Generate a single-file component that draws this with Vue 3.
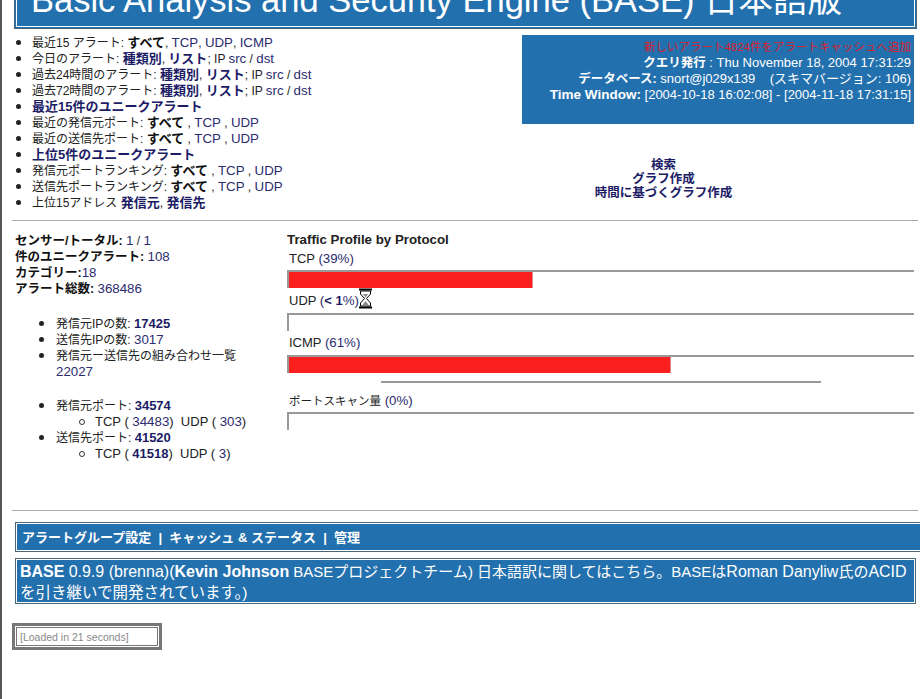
<script setup>
const menu = [
  { label: '最近15 アラート: ', links: [['すべて', 1], [', '], ['TCP', 0, 1], [', '], ['UDP', 0, 1], [', '], ['ICMP', 0, 1]] },
  { label: '今日のアラート: ', links: [['種類別', 1, 1], [', '], ['リスト', 1, 1], ['; IP '], ['src', 0, 1], [' / '], ['dst', 0, 1]] },
  { label: '過去24時間のアラート: ', links: [['種類別', 1, 1], [', '], ['リスト', 1, 1], ['; IP '], ['src', 0, 1], [' / '], ['dst', 0, 1]] },
  { label: '過去72時間のアラート: ', links: [['種類別', 1, 1], [', '], ['リスト', 1, 1], ['; IP '], ['src', 0, 1], [' / '], ['dst', 0, 1]] },
  { label: '', links: [['最近15件のユニークアラート', 1, 1]] },
  { label: '最近の発信元ポート: ', links: [['すべて', 1], [' , '], ['TCP', 0, 1], [' , '], ['UDP', 0, 1]] },
  { label: '最近の送信先ポート: ', links: [['すべて', 1], [' , '], ['TCP', 0, 1], [' , '], ['UDP', 0, 1]] },
  { label: '', links: [['上位5件のユニークアラート', 1, 1]] },
  { label: '発信元ポートランキング: ', links: [['すべて', 1], [' , '], ['TCP', 0, 1], [' , '], ['UDP', 0, 1]] },
  { label: '送信先ポートランキング: ', links: [['すべて', 1], [' , '], ['TCP', 0, 1], [' , '], ['UDP', 0, 1]] },
  { label: '上位15アドレス ', links: [['発信元', 1, 1], [', '], ['発信先', 1, 1]] },
];

const partClass = (p) => ({ bold: p[1], link: p[2] });
</script>

<template>
  <div class="page">
    <div class="title">Basic Analysis and Security Engine (BASE) 日本語版</div>

    <div class="top">
      <ul class="menu">
        <li v-for="(row, i) in menu" :key="i">{{ row.label }}<span
          v-for="(p, j) in row.links" :key="j" :class="partClass(p)">{{ p[0] }}</span></li>
      </ul>
      <div class="side">
        <div class="info">
          <div class="alert">新しいアラート4824件をアラートキャッシュへ追加</div>
          <div><b>クエリ発行</b> : Thu November 18, 2004 17:31:29</div>
          <div><b>データベース:</b> snort@j029x139 &nbsp; &nbsp;(スキマバージョン: 106)</div>
          <div><b class="window">Time Window:</b> [2004-10-18 16:02:08] - [2004-11-18 17:31:15]</div>
        </div>
        <div class="tools">
          <div>検索</div>
          <div>グラフ作成</div>
          <div>時間に基づくグラフ作成</div>
        </div>
      </div>
    </div>

    <hr class="rule" />

    <div class="middle">
      <div class="stats">
        <div><b>センサー/トータル:</b> <span class="link">1</span> / <span class="link">1</span></div>
        <div><b>件のユニークアラート:</b> <span class="link">108</span></div>
        <div><b>カテゴリー:</b><span class="link">18</span></div>
        <div><b>アラート総数:</b> <span class="link">368486</span></div>
        <ul class="counts first">
          <li>発信元IPの数: <span class="link bold">17425</span></li>
          <li>送信先IPの数: <span class="link">3017</span></li>
          <li>発信元ー送信先の組み合わせ一覧<br /><span class="link">22027</span></li>
        </ul>
        <ul class="counts second">
          <li>発信元ポート: <span class="link bold">34574</span>
            <ul class="sub"><li>TCP ( <span class="link">34483</span>)&nbsp; UDP ( <span class="link">303</span>)</li></ul>
          </li>
          <li>送信先ポート: <span class="link bold">41520</span>
            <ul class="sub"><li>TCP ( <span class="link bold">41518</span>)&nbsp; UDP ( <span class="link">3</span>)</li></ul>
          </li>
        </ul>
      </div>

      <div class="traffic">
        <div class="traffic-head">Traffic Profile by Protocol</div>
        <div class="label tcp">TCP <span class="link">(39%)</span></div>
        <div class="bar"><div class="fill" style="width: 38.8%"></div></div>
        <div class="label udp">UDP <span class="link">(<span class="bold link">&lt; 1</span>%)</span>
          <svg class="hourglass" width="15" height="21" viewBox="0 0 15 21">
            <path d="M1 1.500h13M1 19.500h13" stroke="#000" stroke-width="2.200" fill="none" />
            <path d="M2.500 3v3l4 4.500-4 4.500v3h10v-3l-4-4.500 4-4.500V3z" fill="#fff" stroke="#000" stroke-width="1" />
            <path d="M5 6h5L7.500 9.500zM4 17.500 7.500 13l3.500 4.500z" fill="#888" />
          </svg>
        </div>
        <div class="bar"></div>
        <div class="label icmp">ICMP <span class="link">(61%)</span></div>
        <div class="bar"><div class="fill" style="width: 61%"></div></div>
        <hr class="short" />
        <div class="label scan"><span class="scan-text">ポートスキャン量</span> <span class="link">(0%)</span></div>
        <div class="bar"></div>
      </div>
    </div>

    <hr class="rule lower" />

    <div class="nav">アラートグループ設定 &nbsp;|&nbsp; キャッシュ &amp; ステータス &nbsp;|&nbsp; 管理</div>

    <div class="about">
      <b>BASE</b> <span class="en">0.9.9 (brenna)(</span><b>Kevin Johnson</b> BASEプロジェクトチーム) 日本語訳に関してはこちら。BASEは<span class="en">Roman Danyliw</span>氏の<span class="en">ACID</span><br /><span class="second-line">を引き継いで開発されています。)</span>
    </div>

    <div class="loaded"><span>[Loaded in 21 seconds]</span></div>
  </div>
</template>

<style scoped>
.page {
  box-sizing: border-box;
  width: 920px;
  height: 699px;
  overflow: hidden;
  border-left: 2px solid #555;
  background: #fff;
  color: #222;
  font-family: "Liberation Sans", "Noto Sans CJK JP", sans-serif;
  font-size: 12px;
  line-height: 16px;
}

b,
.bold {
  font-size: 13px;
  font-weight: bold;
  color: #111;
}

.link {
  font-size: 13.3px;
  color: #2b2b70;
}

.bold.link {
  font-size: 13px;
  color: #1c1c66;
}

.title {
  box-sizing: border-box;
  width: 901px;
  height: 42px;
  margin: -14px 0 0 13px;
  padding: 0 0 0 15px;
  background: #2370ae;
  border: 1px solid #2370ae;
  outline: 1px solid #4a6478;
  box-shadow: inset 0 0 0 1px #fff;
  color: #fff;
  font-size: 34.5px;
  line-height: 26px;
  white-space: nowrap;
}

.top {
  display: flex;
  margin-top: 7px;
}

.menu {
  box-sizing: border-box;
  width: 520px;
  margin: 0;
  padding: 0 0 0 30px;
  list-style: none;
}

.menu li {
  height: 16px;
  white-space: nowrap;
}

.menu li::before,
.counts > li::before {
  content: "";
  display: inline-block;
  width: 5px;
  height: 5px;
  margin: 0 11px 2px -16px;
  border-radius: 50%;
  background: #222;
  vertical-align: middle;
}

.side {
  width: 392px;
}

.info {
  box-sizing: border-box;
  height: 89px;
  padding: 4px 3px 0 0;
  background: #2370ae;
  color: #fff;
  font-size: 13px;
  text-align: right;
  white-space: nowrap;
}

.info b {
  font-size: 12.5px;
  color: #fff;
}

.info b.window {
  font-size: 13.5px;
}

.alert {
  color: #d8202c;
  font-size: 11.5px;
}

.tools {
  margin-top: 34px;
  padding-right: 109px;
  color: #1c1c66;
  font-size: 12.5px;
  font-weight: bold;
  line-height: 14px;
  text-align: center;
}

.rule {
  width: 906px;
  height: 0;
  margin: 9px 0 0 10px;
  border: 0;
  border-top: 1px solid #aaa;
}

.rule.lower {
  margin-top: 0;
}

.middle {
  box-sizing: border-box;
  display: flex;
  height: 289px;
  padding-top: 12px;
}

.stats {
  box-sizing: border-box;
  width: 285px;
  padding-left: 13px;
}

.stats > div b {
  font-size: 12.5px;
}

.counts {
  margin: 0;
  padding-left: 41px;
  list-style: none;
}

.counts > li::before {
  margin: 0 12px 2px -17px;
}

.counts.first {
  margin-top: 19px;
}

.counts.second {
  margin-top: 18px;
}

.sub {
  margin: 0;
  padding-left: 39px;
  font-size: 13px;
  list-style: none;
}

.sub li::before {
  content: "";
  display: inline-block;
  box-sizing: border-box;
  width: 6px;
  height: 6px;
  margin: 0 10px 2px -16px;
  border: 1px solid #333;
  border-radius: 50%;
  vertical-align: middle;
}

.traffic {
  width: 627px;
}

.traffic-head {
  margin-top: -1px;
  color: #222;
  font-size: 13.3px;
  font-weight: bold;
}

.label {
  height: 16px;
  margin: 3px 0 3px 2px;
  font-size: 13px;
  white-space: nowrap;
}

.label.udp {
  position: relative;
  margin-top: 5px;
  margin-bottom: 4px;
}

.label.icmp {
  margin-top: 4px;
  margin-bottom: 4px;
}

.label.scan {
  margin-top: 10px;
  margin-bottom: 3px;
}

.hourglass {
  position: absolute;
  left: 69px;
  top: -5px;
}

.scan-text {
  font-size: 11.5px;
}

.bar {
  box-sizing: border-box;
  height: 18px;
  border-top: 2px solid #999;
  border-left: 2px solid #999;
}

.fill {
  height: 16px;
  background: #fb1f1f;
  border-right: 1px solid #e08a8a;
}

.short {
  width: 440px;
  height: 0;
  margin: 8px 0 0 94px;
  border: 0;
  border-top: 2px solid #999;
}

.nav {
  box-sizing: border-box;
  width: 920px;
  height: 30px;
  margin: 11px 0 0 13px;
  padding: 6px 0 0 6px;
  background: #2370ae;
  border: 1px solid #4a6478;
  box-shadow: inset 0 0 0 1px #fff;
  color: #fff;
  font-size: 13px;
  font-weight: bold;
  line-height: 18px;
  white-space: nowrap;
}

.about {
  box-sizing: border-box;
  width: 901px;
  height: 46px;
  margin: 6px 0 0 13px;
  padding: 2px 4px 0 4px;
  background: #2370ae;
  border: 1px solid #4a6478;
  box-shadow: inset 0 0 0 1px #fff;
  color: #fff;
  font-size: 15px;
  line-height: 21px;
  white-space: nowrap;
}

.about b {
  color: #fff;
  font-size: 16px;
}

.en,
.second-line {
  font-size: 16px;
}

.second-line {
  font-size: 15.5px;
}

.loaded {
  box-sizing: border-box;
  width: 150px;
  height: 27px;
  margin: 19px 0 0 10px;
  padding: 1px;
  border: 3px solid #777;
}

.loaded span {
  display: block;
  box-sizing: border-box;
  height: 100%;
  padding: 2px 0 0 3px;
  border: 1px solid #777;
  color: #888;
  font-size: 10.5px;
  line-height: 14px;
}
</style>
